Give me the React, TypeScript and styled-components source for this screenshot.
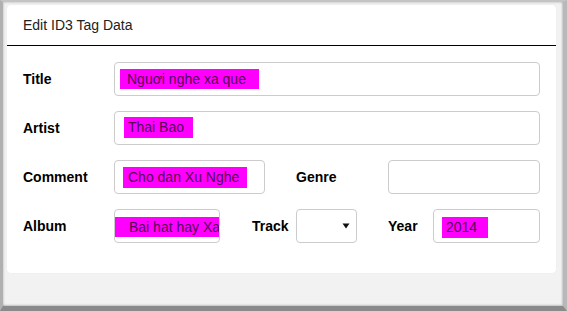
import React from "react";
import styled, { createGlobalStyle } from "styled-components";

const Global = createGlobalStyle`
  html, body { margin: 0; padding: 0; background: #f2f2f2; }
  body { font-family: "Liberation Sans", Arial, sans-serif; }
  * { box-sizing: border-box; }
`;

const Frame = styled.div`
  width: 567px;
  height: 311px;
  background: #f2f2f2;
  border-style: solid;
  border-width: 2px 4px 5px 3px;
  border-color: #c4c4c4 #b8b8b8 #8a8a8a #b0b0b0;
  box-shadow: inset 1px 1px 2px rgba(0, 0, 0, 0.12), inset -1px -1px 2px rgba(0, 0, 0, 0.2);
  padding: 3px 0 0 4px;
`;

const Card = styled.section`
  width: 549px;
  height: 268px;
  background: #fff;
  border-radius: 4px;
  box-shadow: 0 0 1px rgba(0, 0, 0, 0.08);
  display: flex;
  flex-direction: column;
`;

const Header = styled.header`
  height: 41px;
  border-bottom: 1px solid #000;
  display: flex;
  align-items: center;
  padding: 0 16px;
  font-size: 14px;
  color: #222;
`;

const Body = styled.div`
  padding: 16px 16px 0 16px;
  display: flex;
  flex-direction: column;
  gap: 15px;
`;

const Row = styled.div`
  display: flex;
  align-items: center;
  height: 34px;
`;

const Label = styled.label<{ $w: number; $ml?: number }>`
  width: ${(p) => p.$w}px;
  margin-left: ${(p) => p.$ml ?? 0}px;
  flex: none;
  font-size: 14px;
  font-weight: bold;
  color: #000;
`;

const Field = styled.div<{ $w?: number }>`
  ${(p) => (p.$w ? `width: ${p.$w}px; flex: none;` : "flex: 1;")}
  height: 34px;
  border: 1px solid #ccc;
  border-radius: 4px;
  background: #fff;
  display: flex;
  align-items: center;
  overflow: hidden;
  font-size: 14px;
  color: #555;
  white-space: nowrap;
`;

const Mark = styled.span<{ $ml: number; $pl: number; $pr: number; $h: number; $dy?: number }>`
  display: inline-flex;
  align-items: center;
  flex: none;
  margin-left: ${(p) => p.$ml}px;
  padding: 0 ${(p) => p.$pr}px 0 ${(p) => p.$pl}px;
  height: ${(p) => p.$h}px;
  position: relative;
  top: ${(p) => p.$dy ?? 0}px;
  background: #ff00ff;
  color: #550055;
`;

const SelectBox = styled.div<{ $w: number }>`
  width: ${(p) => p.$w}px;
  flex: none;
  height: 34px;
  border: 1px solid #ccc;
  border-radius: 4px;
  background: #fff;
  display: flex;
  align-items: center;
  justify-content: flex-end;
  padding-right: 6px;
`;

const Caret = () => (
  <svg width="8" height="6" viewBox="0 0 8 6">
    <path d="M0.5 0.5 H7.5 L4 5.5 Z" fill="#111" />
  </svg>
);

export default function App() {
  return (
    <>
      <Global />
      <Frame>
        <Card>
          <Header>Edit ID3 Tag Data</Header>
          <Body>
            <Row>
              <Label $w={91}>Title</Label>
              <Field>
                <Mark $ml={5} $pl={7} $pr={13} $h={20}>Nguơi nghe xa que</Mark>
              </Field>
            </Row>
            <Row>
              <Label $w={91}>Artist</Label>
              <Field>
                <Mark $ml={9} $pl={4} $pr={9} $h={21} $dy={-1}>Thai Bao</Mark>
              </Field>
            </Row>
            <Row>
              <Label $w={91}>Comment</Label>
              <Field $w={151}>
                <Mark $ml={8} $pl={5} $pr={8} $h={21}>Cho dan Xu Nghe</Mark>
              </Field>
              <Label $w={92} $ml={31}>Genre</Label>
              <Field $w={152} />
            </Row>
            <Row>
              <Label $w={91}>Album</Label>
              <Field $w={106}>
                <Mark $ml={0} $pl={14} $pr={0} $h={20} $dy={1}>Bai hat hay Xa que</Mark>
              </Field>
              <Label $w={44} $ml={32}>Track</Label>
              <SelectBox $w={61}>
                <Caret />
              </SelectBox>
              <Label $w={45} $ml={31}>Year</Label>
              <Field $w={107}>
                <Mark $ml={8} $pl={4} $pr={11} $h={21} $dy={1}>2014</Mark>
              </Field>
            </Row>
          </Body>
        </Card>
      </Frame>
    </>
  );
}
